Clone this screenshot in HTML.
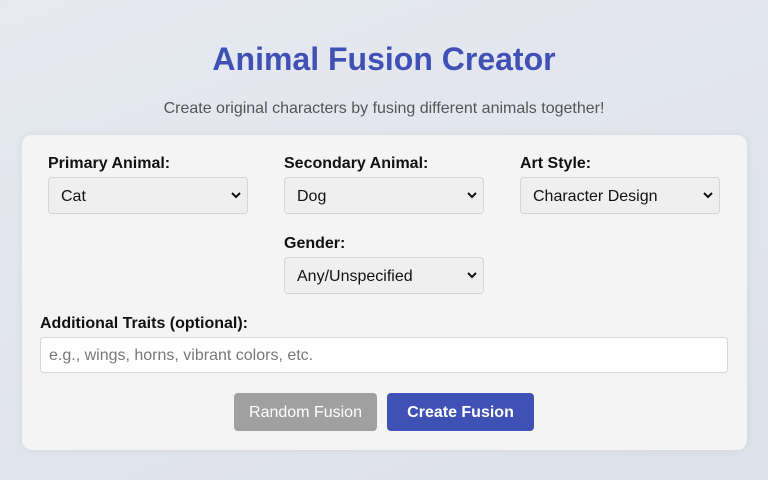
<!DOCTYPE html>
<html><head><style>
*{box-sizing:border-box;margin:0;padding:0}
body{width:768px;height:480px;overflow:hidden;font-family:"Liberation Sans",sans-serif;background:#e4e7ee}
.wrap{position:absolute;left:0;top:0;width:768px;height:480px;border-radius:14px 14px 0 0;background:linear-gradient(160deg,#e6e9f0,#dde1ea)}
h1{position:absolute;top:41px;width:768px;text-align:center;font-size:32px;color:#3f51b5;font-weight:bold}
.sub{position:absolute;top:100px;width:768px;text-align:center;font-size:16px;color:#555}
.card{position:absolute;left:22px;top:135px;width:725px;height:315px;background:#f4f4f4;border-radius:10px;box-shadow:0 0 8px rgba(0,0,0,.06)}
.lbl{position:absolute;font-size:16px;font-weight:bold;color:#111}
.sel{position:absolute;width:200px;height:37px;background:#efefef;border:1px solid #d6d6d6;border-radius:4px;font-size:16px;color:#111;padding:10px 0 0 12px}
.sel svg{position:absolute;right:6px;top:14px}
.inp{position:absolute;left:40px;top:337px;width:688px;height:36px;background:#fff;border:1px solid #d8d8d8;border-radius:4px;font-size:16px;color:#777;padding:9px 0 0 8px}
.btn{position:absolute;top:393px;height:38px;border-radius:4px;font-size:16px;color:#fff;text-align:center;line-height:39px}
</style></head><body>
<div class="wrap"></div>
<h1>Animal Fusion Creator</h1>
<div class="sub">Create original characters by fusing different animals together!</div>
<div class="card"></div>
<div class="lbl" style="left:48px;top:155px">Primary Animal:</div>
<div class="lbl" style="left:284px;top:155px">Secondary Animal:</div>
<div class="lbl" style="left:520px;top:155px">Art Style:</div>
<div class="lbl" style="left:284px;top:235px">Gender:</div>
<div class="lbl" style="left:40px;top:315px">Additional Traits (optional):</div>
<div class="sel" style="left:48px;top:177px">Cat<svg width="10" height="7" viewBox="0 0 10 7"><path d="M1 1l4 4 4-4" stroke="#111" stroke-width="2" fill="none"/></svg></div>
<div class="sel" style="left:284px;top:177px">Dog<svg width="10" height="7" viewBox="0 0 10 7"><path d="M1 1l4 4 4-4" stroke="#111" stroke-width="2" fill="none"/></svg></div>
<div class="sel" style="left:520px;top:177px">Character Design<svg width="10" height="7" viewBox="0 0 10 7"><path d="M1 1l4 4 4-4" stroke="#111" stroke-width="2" fill="none"/></svg></div>
<div class="sel" style="left:284px;top:257px">Any/Unspecified<svg width="10" height="7" viewBox="0 0 10 7"><path d="M1 1l4 4 4-4" stroke="#111" stroke-width="2" fill="none"/></svg></div>
<div class="inp">e.g., wings, horns, vibrant colors, etc.</div>
<div class="btn" style="left:234px;width:143px;background:#a0a0a0">Random Fusion</div>
<div class="btn" style="left:387px;width:147px;background:#3f51b5;font-weight:bold">Create Fusion</div>
</body></html>
